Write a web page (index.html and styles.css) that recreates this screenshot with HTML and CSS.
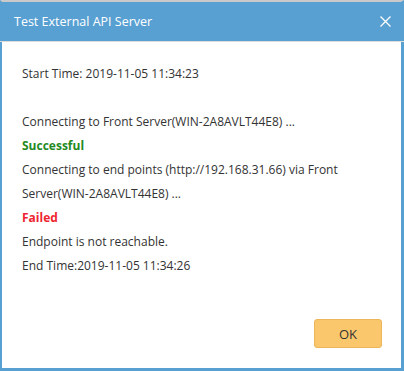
FILE: index.html
```html
<!DOCTYPE html>
<html lang="en">
<head>
  <meta charset="UTF-8" />
  <meta name="viewport" content="width=device-width, initial-scale=1" />
  <title>Test External API Server</title>
  <link rel="stylesheet" href="styles.css">
</head>
<body>
  <div class="dialog">
    <div class="dialog-header">
      <span class="dialog-title">Test External API Server</span>
      <button class="close-btn" aria-label="Close">
        <svg width="11" height="11" viewBox="0 0 11 11">
          <path d="M0.5 0.5 L10.5 10.5 M10.5 0.5 L0.5 10.5" stroke="#fff" stroke-width="1.3" fill="none" />
        </svg>
      </button>
    </div>

    <div class="dialog-body">
      <p>Start Time: 2019-11-05 11:34:23</p>
      <p class="blank">&nbsp;</p>
      <p>Connecting to Front Server(WIN-2A8AVLT44E8) ...</p>
      <p class="status success">Successful</p>
      <p>Connecting to end points (http://192.168.31.66) via Front Server(WIN-2A8AVLT44E8) ...</p>
      <p class="status failed">Failed</p>
      <p>Endpoint is not reachable.</p>
      <p>End Time:2019-11-05 11:34:26</p>
    </div>

    <div class="dialog-footer">
      <button class="ok-btn">OK</button>
    </div>
  </div>
</body>
</html>
```

FILE: styles.css
```css
body {
  font-family: 'Open Sans', 'Noto Sans', sans-serif;
  margin: 0;
  padding: 0;
  background-color: #fff;
  color: #333;
}

.dialog {
  width: 404px;
  height: 371px;
  box-sizing: border-box;
  display: flex;
  flex-direction: column;
  border-top: 2px solid #c9c9c9;
  border-left: 2px solid #589fd2;
  border-right: 3px solid #589fd2;
  border-bottom: 3px solid #589fd2;
  background-color: #fff;
}

.dialog-header {
  height: 39px;
  display: flex;
  align-items: center;
  justify-content: space-between;
  margin-left: -2px;
  margin-right: -3px;
  padding: 0 13px 0 14px;
  background-color: #589fd2;
  border-bottom: 1px solid #dcdcdc;
}

.dialog-title {
  color: #fff;
  font-size: 12.5px;
  font-weight: 500;
}

.close-btn {
  background: none;
  border: none;
  padding: 0;
  cursor: pointer;
  display: flex;
}

.dialog-body {
  flex: 1;
  padding: 20px 20px 0 20px;
  font-size: 12px;
  line-height: 24px;
}

.dialog-body p {
  margin: 0;
}

.status {
  font-weight: 700;
}

.success {
  color: #1f8a1f;
}

.failed {
  color: #ee2430;
}

.dialog-footer {
  display: flex;
  justify-content: flex-end;
  padding: 0 19px 20px 0;
}

.ok-btn {
  width: 68px;
  height: 29px;
  background-color: #fac76c;
  border: 1px solid #edb65a;
  border-radius: 3px;
  font-family: inherit;
  font-size: 13px;
  color: #333;
  cursor: pointer;
}
```
